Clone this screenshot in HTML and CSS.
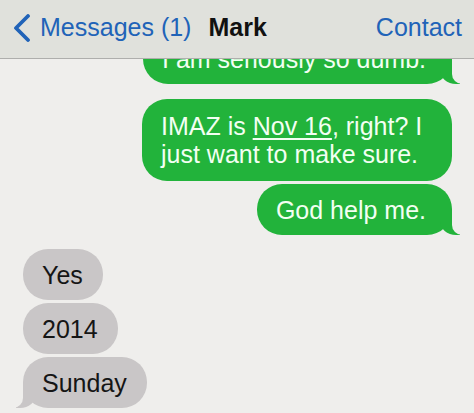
FILE: index.html
```html
<html>
    <head>
        <title>Mark</title>
        <link rel="stylesheet" href="styles.css">
    </head>

    <body>
        <div class="screen">
            <div class="nav-bar">
                <svg class="back-icon" width="20" height="28" viewBox="0 0 20 28">
                    <path d="M16 2 L4 14 L16 26" fill="none" stroke="#2163b8" stroke-width="3.8" stroke-linecap="round" stroke-linejoin="round"/>
                </svg>
                <span class="nav-back">Messages (1)</span>
                <span class="nav-title">Mark</span>
                <span class="nav-action">Contact</span>
            </div>

            <div class="thread">
                <div class="bubble sent tail first">I am seriously so dumb.</div>
                <div class="bubble sent wide">IMAZ is <span class="link">Nov 16</span>, right? I just want to make sure.</div>
                <div class="bubble sent tail">God help me.</div>

                <div class="bubble received group-start">Yes</div>
                <div class="bubble received">2014</div>
                <div class="bubble received tail">Sunday</div>
            </div>
        </div>
    </body>
</html>
```

FILE: styles.css
```css
body{
    margin: 0;
    font-family: "Liberation Sans", Arial, sans-serif;
    background: #efeeec;
}

.screen{
    width: 474px;
    height: 413px;
    overflow: hidden;
    display: flex;
    flex-direction: column;
}

.nav-bar{
    height: 59px;
    flex: none;
    display: flex;
    align-items: center;
    padding: 0 12px 4px 12px;
    box-sizing: border-box;
    background: #e0e1dc;
    border-bottom: 1px solid #aeaeac;
    font-size: 25px;
    position: relative;
    z-index: 2;
}

.back-icon{
    margin-right: 8px;
    margin-top: 2px;
}

.nav-back{
    color: #2163b8;
}

.nav-title{
    margin-left: 17px;
    font-weight: bold;
    color: #111;
}

.nav-action{
    margin-left: auto;
    color: #2163b8;
}

.thread{
    flex: 1;
    overflow: hidden;
    display: flex;
    flex-direction: column;
    padding: 0 22px 0 23px;
}

.bubble{
    position: relative;
    font-size: 25px;
    line-height: 28px;
    padding: 12px 20px 11px 19px;
    border-radius: 25px;
    margin-top: 3px;
    max-width: 265px;
}

.sent{
    align-self: flex-end;
    background: #22b33b;
    color: #f2fff2;
    padding-right: 26px;
    padding-left: 19px;
}

.sent.first{
    margin-top: -26px;
}

.sent.wide{
    margin-top: 15px;
    padding-top: 13px;
    padding-bottom: 13px;
}

.received{
    align-self: flex-start;
    background: #c9c6c7;
    color: #151515;
}

.received.group-start{
    margin-top: 14px;
}

.link{
    text-decoration: underline;
    text-decoration-thickness: 1.5px;
    text-underline-offset: 3px;
}

/* bubble tails */
.tail::before,
.tail::after{
    content: "";
    position: absolute;
    bottom: 0;
    height: 25px;
}

.sent.tail::before{
    right: -8px;
    width: 20px;
    background: #22b33b;
    border-bottom-left-radius: 16px 14px;
}

.sent.tail::after{
    right: -26px;
    width: 26px;
    background: #efeeec;
    border-bottom-left-radius: 10px;
}

.received.tail::before{
    left: -7px;
    width: 20px;
    background: #c9c6c7;
    border-bottom-right-radius: 16px 14px;
}

.received.tail::after{
    left: -26px;
    width: 26px;
    background: #efeeec;
    border-bottom-right-radius: 10px;
}
```
